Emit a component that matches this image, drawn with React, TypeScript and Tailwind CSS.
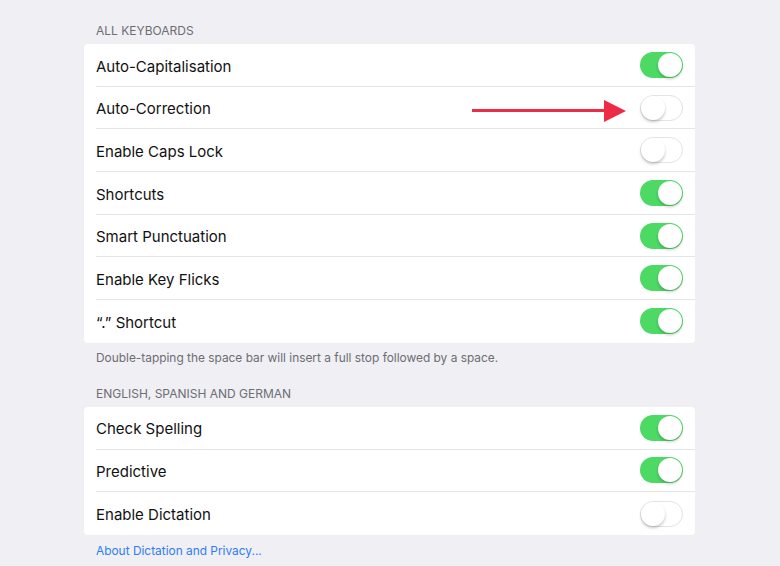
import React from "react";

type Row = { label: string; on: boolean; arrow?: boolean };

const allKeyboards: Row[] = [
  { label: "Auto-Capitalisation", on: true },
  { label: "Auto-Correction", on: false, arrow: true },
  { label: "Enable Caps Lock", on: false },
  { label: "Shortcuts", on: true },
  { label: "Smart Punctuation", on: true },
  { label: "Enable Key Flicks", on: true },
  { label: "\u201C.\u201D Shortcut", on: true },
];

const languages: Row[] = [
  { label: "Check Spelling", on: true },
  { label: "Predictive", on: true },
  { label: "Enable Dictation", on: false },
];

function Toggle({ on }: { on: boolean }) {
  return (
    <div
      className={
        on
          ? "relative w-[43px] h-[26px] rounded-full bg-[#4cd964]"
          : "relative w-[43px] h-[26px] rounded-full bg-white border border-[#e3e3e8]"
      }
    >
      <div
        className={
          on
            ? "absolute top-[1px] right-[1px] w-[24px] h-[24px] rounded-full bg-white shadow-[0_2px_3px_rgba(0,0,0,0.2)]"
            : "absolute top-0 left-0 w-[24px] h-[24px] rounded-full bg-white shadow-[0_2px_3px_rgba(0,0,0,0.22)]"
        }
      />
    </div>
  );
}

function Group({ rows }: { rows: Row[] }) {
  return (
    <div className="bg-white rounded-[4px]">
      {rows.map((r, i) => (
        <div key={r.label} className="relative pl-3">
          <div
            className={
              i < rows.length - 1
                ? "flex items-center justify-between h-[42.7px] pr-3 border-b border-[#e4e4e9]"
                : "flex items-center justify-between h-[42.7px] pr-3"
            }
          >
            <span className="pt-1 text-[15px] text-[#111]">{r.label}</span>
            <Toggle on={r.on} />
          </div>
          {r.arrow && (
            <div className="absolute left-[388px] top-[13px] flex items-center">
              <div className="w-[132px] h-[3px] bg-[#ee2b47]" />
              <div className="w-0 h-0 border-y-[11px] border-y-transparent border-l-[22px] border-l-[#ee2b47]" />
            </div>
          )}
        </div>
      ))}
    </div>
  );
}

export default function App() {
  return (
    <div className="w-[780px] h-[566px] overflow-hidden bg-[#efeff4] font-['Inter','Liberation_Sans',sans-serif]">
      <div className="ml-[84px] w-[611px]">
        <div className="pt-[24px] pb-[6px] pl-3 text-[12px] leading-[14px] text-[#6d6d72] uppercase">All Keyboards</div>
        <Group rows={allKeyboards} />
        <div className="pt-[8px] pl-3 text-[11.9px] leading-[14px] text-[#6d6d72]">
          Double-tapping the space bar will insert a full stop followed by a space.
        </div>
        <div className="pt-[22px] pb-[6px] pl-3 text-[12px] leading-[14px] text-[#6d6d72] uppercase">
          English, Spanish and German
        </div>
        <Group rows={languages} />
        <div className="pt-[9px] pl-3 text-[11.9px] leading-[14px] text-[#2f7df6]">About Dictation and Privacy...</div>
      </div>
    </div>
  );
}
